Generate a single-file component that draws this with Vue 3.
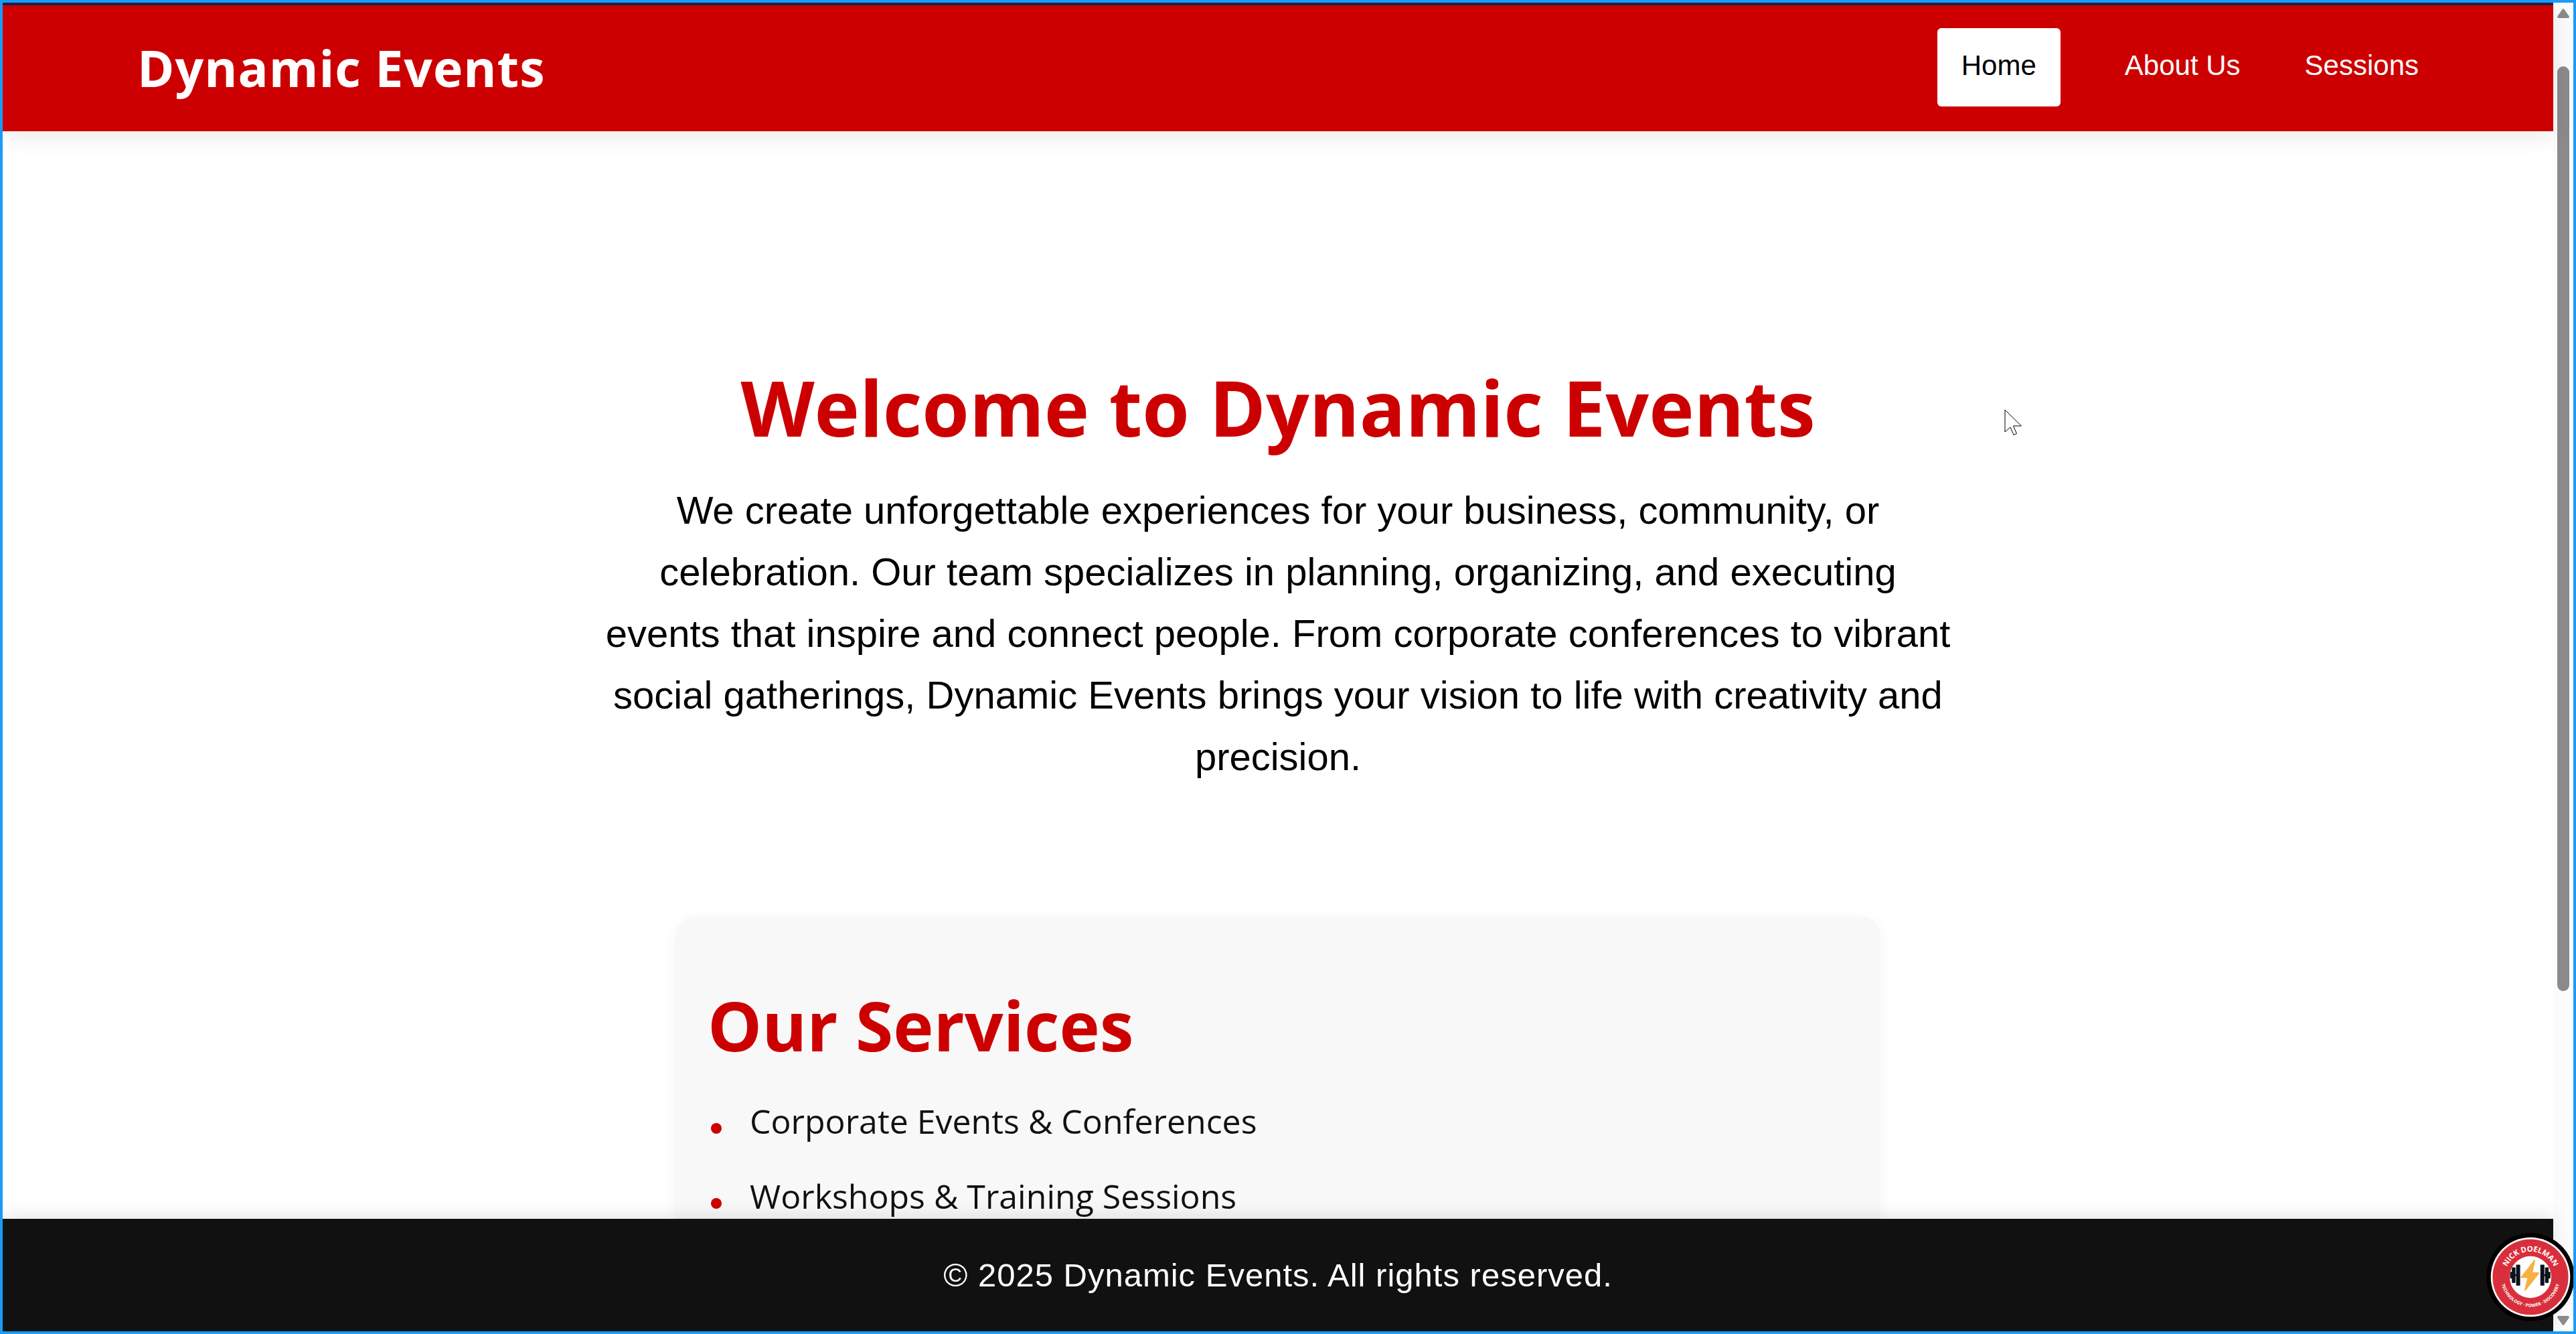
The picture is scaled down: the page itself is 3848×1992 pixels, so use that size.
<template>
  <div class="window">
    <div class="page">
      <header class="site-header">
        <div class="logo">Dynamic Events</div>
        <nav class="nav" aria-label="Main">
          <a
            v-for="link in links"
            :key="link"
            href="#"
            :class="{ active: current === link }"
            @click.prevent="current = link"
          >{{ link }}</a>
        </nav>
      </header>

      <main class="content">
        <section class="hero">
          <h1>Welcome to Dynamic Events</h1>
          <p>
            We create unforgettable experiences for your business, community, or celebration. Our team
            specializes in planning, organizing, and executing events that inspire and connect people. From
            corporate conferences to vibrant social gatherings, Dynamic Events brings your vision to life
            with creativity and precision.
          </p>
        </section>

        <section class="services">
          <h2>Our Services</h2>
          <ul>
            <li v-for="service in services" :key="service">{{ service }}</li>
          </ul>
        </section>
      </main>

      <footer class="site-footer">&copy; 2025 Dynamic Events. All rights reserved.</footer>
    </div>

    <!-- Scrollbar -->
    <div class="scrollbar" aria-hidden="true">
      <svg class="arrow" viewBox="0 0 18 14"><path d="M7.5 1Q9-1 10.500 1L17.500 11Q18.500 14 16 14H2Q-.5 14 .5 11Z" /></svg>
      <div class="track"><div class="thumb"></div></div>
      <svg class="arrow" viewBox="0 0 18 14"><path d="M7.500 13Q9 15 10.500 13L17.500 3Q18.500 0 16 0H2Q-.5 0 .5 3Z" /></svg>
    </div>

    <!-- Badge -->
    <svg class="badge" viewBox="0 0 394 394" role="img" aria-label="Nick Doelman">
      <defs>
        <path id="arc-top" d="M83 197A114 114 0 0 1 311 197" />
        <path id="arc-bottom" d="M64 197A133 133 0 0 0 330 197" />
      </defs>
      <circle cx="197" cy="197" r="196" fill="#000" />
      <circle cx="197" cy="197" r="177" fill="#fff" />
      <circle cx="197" cy="197" r="169" fill="#d92f3c" />
      <circle cx="197" cy="197" r="93" fill="#fff" />
      <g fill="#0c111d">
        <rect x="133" y="142" width="18" height="93" rx="2" />
        <rect x="114" y="154" width="16" height="69" rx="2" />
        <rect x="106" y="174" width="10" height="29" rx="2" />
        <rect x="128" y="184" width="6" height="9" />
        <rect x="241" y="142" width="18" height="93" rx="2" />
        <rect x="262" y="154" width="16" height="69" rx="2" />
        <rect x="276" y="174" width="10" height="29" rx="2" />
        <rect x="258" y="184" width="6" height="9" />
      </g>
      <path
        d="M214 120L154 196Q151 201 157 201H183L170 256Q171 261 176 257L235 182Q238 177 232 176L207 175L218 123Q218 118 214 120Z"
        fill="#f8b042"
      />
      <text class="badge-name"><textPath href="#arc-top" startOffset="50%">NICK DOELMAN</textPath></text>
      <text class="badge-motto"><textPath href="#arc-bottom" startOffset="50%">TECHNOLOGY · POWER · DISCOVERY</textPath></text>
    </svg>

    <!-- Mouse pointer -->
    <svg class="pointer" viewBox="0 0 27 40" aria-hidden="true">
      <path d="M1 1V34L9 27L14 38.500L18.500 36.500L13.500 25H25.500Z" fill="#fff" stroke="#000" />
    </svg>
  </div>
</template>

<script setup>
import { ref } from 'vue';

const links = ['Home', 'About Us', 'Sessions'];
const current = ref('Home');

const services = ['Corporate Events & Conferences', 'Workshops & Training Sessions'];
</script>

<style>
body {
  margin: 0;
  background: #fff;
}
</style>

<style scoped>
.window {
  position: relative;
  display: flex;
  box-sizing: border-box;
  height: 100vh;
  border: 4px solid #1a9bf5;
  overflow: hidden;
  font-family: "Liberation Sans", Arial, sans-serif;
}

.page {
  flex: 1;
  min-width: 0;
  display: flex;
  flex-direction: column;
}

.site-header {
  position: relative;
  z-index: 1;
  display: flex;
  align-items: center;
  justify-content: space-between;
  box-sizing: border-box;
  height: 192px;
  padding: 0 201px 3px;
  border-top: 4px solid #201f45;
  background: #cc0000;
  box-shadow: 0 5px 36px rgba(0, 0, 0, 0.1);
}

.logo {
  font-family: "Open Sans", "Noto Sans", sans-serif;
  font-size: 75px;
  font-weight: 700;
  letter-spacing: 1px;
  color: #fff;
}

.nav {
  display: flex;
  gap: 96px;
}

.nav a {
  padding: 32px 0 38px;
  font-size: 42px;
  line-height: 47px;
  color: #fff;
  text-decoration: none;
}

.nav a.active {
  padding-left: 36px;
  padding-right: 36px;
  border-radius: 6px;
  background: #fff;
  color: #000;
}

.content {
  flex: 1;
  min-height: 0;
  overflow: hidden;
  padding: 342px 48px 0;
}

.hero {
  max-width: 2020px;
  margin: 0 auto 193px;
  text-align: center;
}

h1,
h2 {
  margin: 0;
  font-family: "Open Sans", "Noto Sans", sans-serif;
  font-weight: 700;
  color: #cc0000;
}

h1 {
  font-size: 114px;
  line-height: 140px;
}

.hero p {
  margin: 38px 0 0;
  font-size: 58px;
  line-height: 92px;
  color: #000;
}

.services {
  box-sizing: border-box;
  max-width: 1800px;
  margin: 0 auto;
  padding: 98px 48px 48px;
  border-radius: 29px;
  background: #f8f8f8;
  box-shadow: 0 5px 24px rgba(0, 0, 0, 0.04);
}

h2 {
  font-size: 102px;
  line-height: 128px;
}

ul {
  display: flex;
  flex-direction: column;
  gap: 40px;
  margin: 43px 0 0;
  padding: 0 0 0 5px;
  list-style: none;
}

li {
  display: flex;
  align-items: baseline;
  gap: 42px;
  font-family: "Open Sans", "Noto Sans", sans-serif;
  font-size: 50px;
  line-height: 72px;
  color: #111;
}

li::before {
  content: "";
  width: 16px;
  height: 16px;
  border-radius: 50%;
  background: #cc0000;
}

.site-footer {
  position: relative;
  z-index: 1;
  height: 168px;
  background: #111;
  box-shadow: 0 -5px 24px rgba(0, 0, 0, 0.1);
  color: #fff;
  font-size: 49px;
  line-height: 168px;
  letter-spacing: 1px;
  text-align: center;
}

.scrollbar {
  display: flex;
  flex-direction: column;
  align-items: center;
  box-sizing: border-box;
  width: 30px;
  padding: 9px 0;
  background: #fcfcfc;
}

.arrow {
  width: 18px;
  height: 14px;
  fill: #8b8b8b;
}

.track {
  flex: 1;
  width: 18px;
  padding: 72px 0;
}

.thumb {
  height: 77%;
  border-radius: 9px;
  background: #8b8b8b;
}

.badge {
  position: absolute;
  right: -2px;
  bottom: 15px;
  z-index: 2;
  width: 132px;
  height: 132px;
}

.badge text {
  font-family: "Open Sans", "Noto Sans", sans-serif;
  font-weight: 700;
  fill: #fff;
  text-anchor: middle;
}

.badge-name {
  font-size: 34px;
}

.badge-motto {
  font-size: 20px;
}

.pointer {
  position: absolute;
  top: 607px;
  left: 2990px;
  width: 27px;
  height: 40px;
}
</style>
